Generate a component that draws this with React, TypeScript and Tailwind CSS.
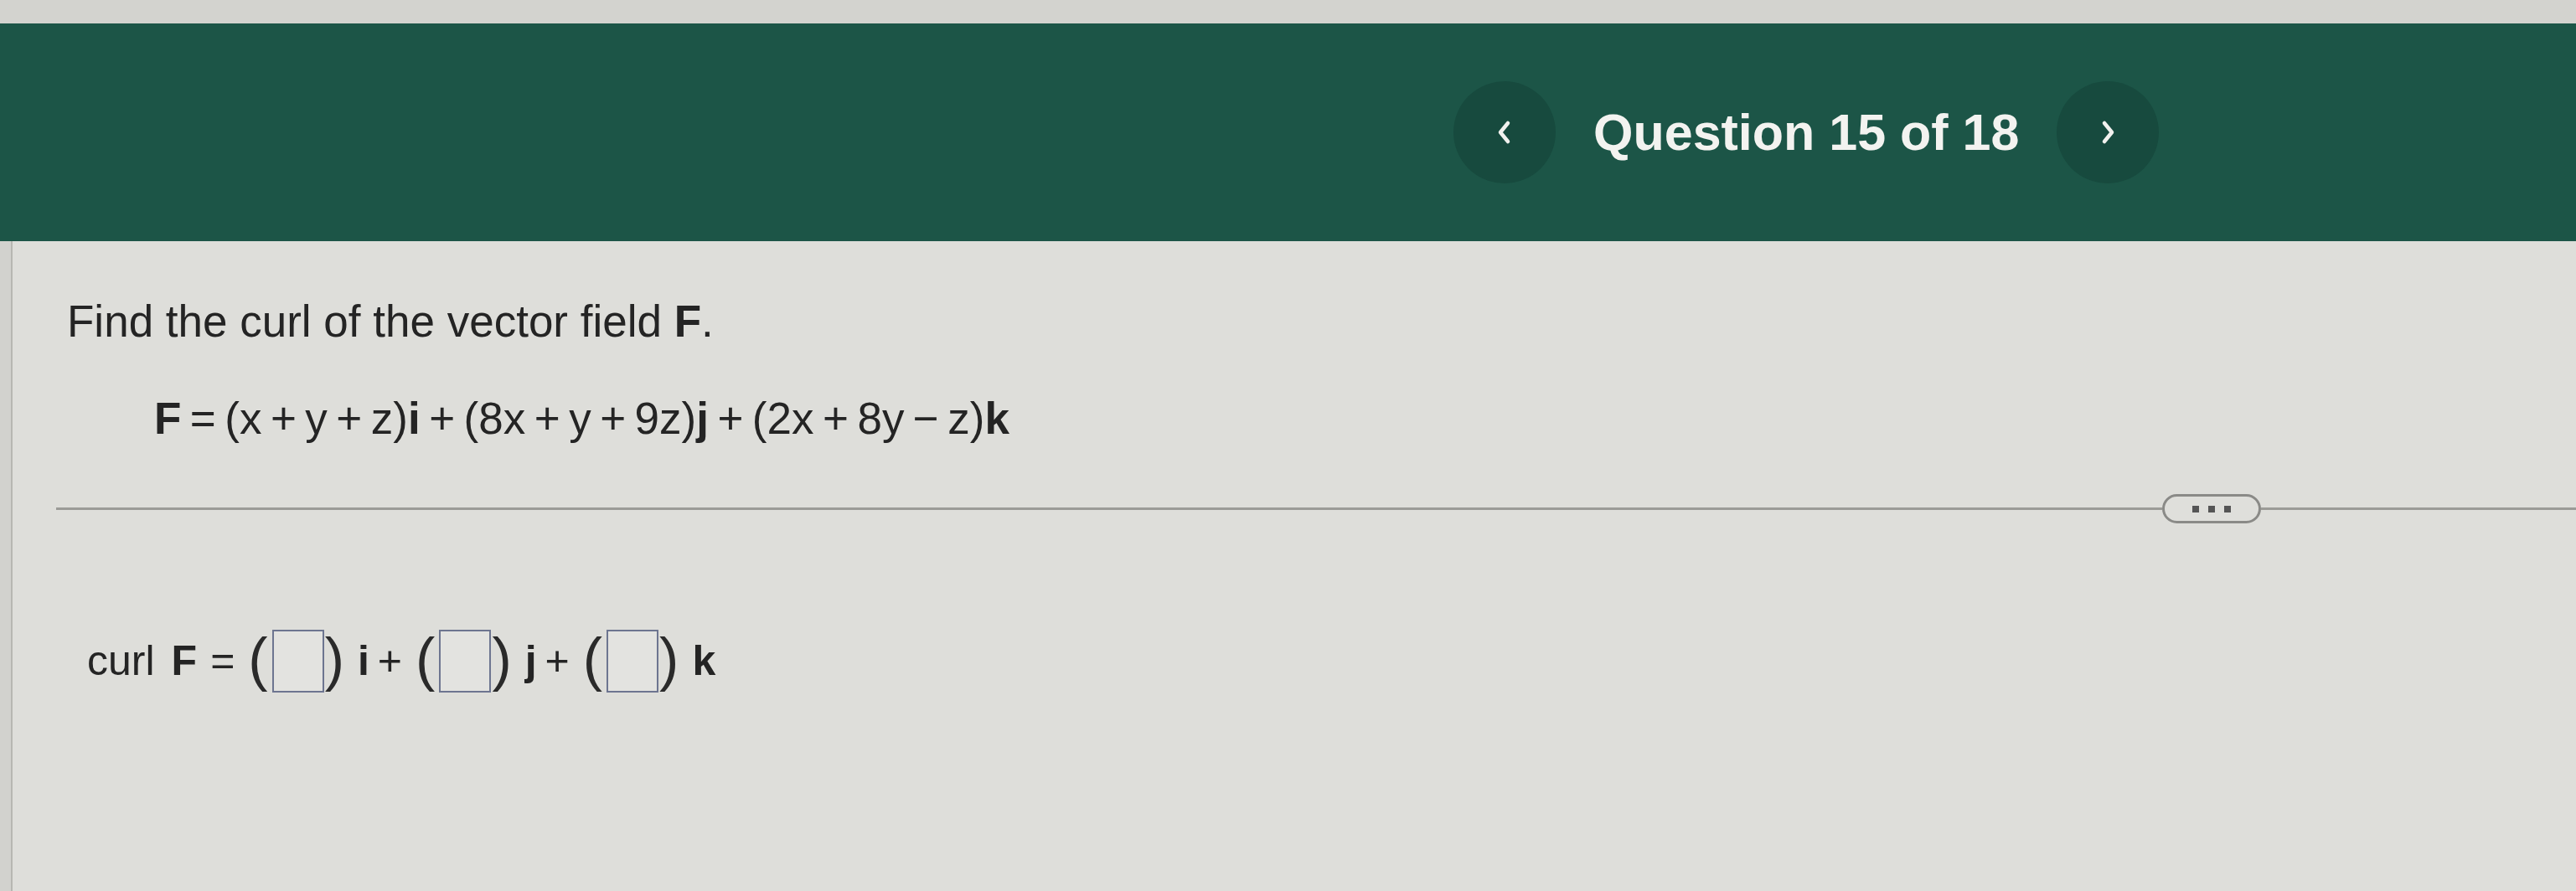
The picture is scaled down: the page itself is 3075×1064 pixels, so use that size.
import React from "react";

const font = {fontFamily: '"Liberation Sans", Arial, sans-serif'};

const NavButton: React.FC<{dir: "prev" | "next"}> = ({dir}) => (
    <button className="flex items-center justify-center w-[122px] h-[122px] rounded-full bg-[#174a3e] shrink-0">
        <svg width="22" height="32" viewBox="0 0 22 32" fill="none">
            <path
                d={dir === "prev" ? "M15 5 L6 16 L15 27" : "M7 5 L16 16 L7 27"}
                stroke="#f1f1ee"
                strokeWidth="4.5"
                strokeLinecap="round"
                strokeLinejoin="round"
            />
        </svg>
    </button>
);

const AnswerBox: React.FC = () => (
    <span className="inline-flex items-center mx-[16px]">
        <span className="text-[70px] leading-none text-[#2a2a2a] -mt-[6px]">(</span>
        <span className="inline-block w-[62px] h-[75px] border-2 border-[#6d7590] bg-[#e3e3e0] ml-[5px] mr-[1px]" />
        <span className="text-[70px] leading-none text-[#2a2a2a] -mt-[6px]">)</span>
    </span>
);

export default function App() {
    return (
        <div className="w-[3075px] h-[1064px] overflow-hidden bg-[#dededa] text-[#242424]" style={font}>
            {/* top strip */}
            <div className="h-[28px] bg-[#d3d3cf]" />

            {/* header */}
            <div className="h-[260px] bg-[#1c5547] flex items-center pl-[1735px]">
                <NavButton dir="prev" />
                <div className="mx-[45px] text-[61px] font-bold text-[#f3f3f0] whitespace-nowrap leading-none">
                    Question 15 of 18
                </div>
                <NavButton dir="next" />
            </div>

            {/* body */}
            <div className="flex flex-row h-[776px]">
                <div className="w-[15px] bg-[#d2d2ce] border-r-2 border-[#b7b7b2] shrink-0" />
                <div className="flex-1 flex flex-col">
                    <div className="pt-[64px] pl-[65px] text-[53px] leading-[64px] whitespace-nowrap">
                        Find the curl of the vector field <b>F</b>.
                    </div>

                    <div className="mt-[52px] pl-[169px] text-[53px] leading-[64px] whitespace-nowrap [word-spacing:-0.08em]">
                        <b>F</b> = (x + y + z)<b>i</b> + (8x + y + 9z)<b>j</b> + (2x + 8y − z)<b>k</b>
                    </div>

                    {/* divider with more button */}
                    <div className="mt-[58px] ml-[52px] flex items-center h-[35px]">
                        <div className="flex-1 h-[3px] bg-[#9b9b97]" />
                        <button className="w-[118px] h-[35px] rounded-full border-[3px] border-[#8a8a87] bg-[#dfdfdb] flex items-center justify-center gap-[11px] shrink-0">
                            <span className="w-[8px] h-[8px] bg-[#555]" />
                            <span className="w-[8px] h-[8px] bg-[#555]" />
                            <span className="w-[8px] h-[8px] bg-[#555]" />
                        </button>
                        <div className="w-[376px] h-[3px] bg-[#9b9b97]" />
                    </div>

                    <div className="mt-[127px] pl-[89px] flex items-center text-[50px] whitespace-nowrap">
                        <span>curl</span>
                        <b className="ml-[20px]">F</b>
                        <span className="ml-[16px]">=</span>
                        <AnswerBox />
                        <b>i</b>
                        <span className="ml-[10px]">+</span>
                        <AnswerBox />
                        <b>j</b>
                        <span className="ml-[10px]">+</span>
                        <AnswerBox />
                        <b>k</b>
                    </div>
                </div>
            </div>
        </div>
    );
}
